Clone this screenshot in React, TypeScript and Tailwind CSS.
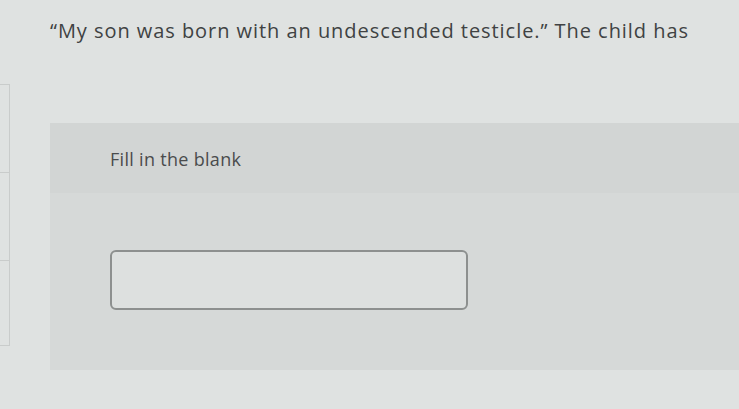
import React from 'react'

export default function App() {
  return (
    <div className="relative h-[409px] w-[739px] overflow-hidden bg-[#dfe2e1] font-['Open_Sans','Liberation_Sans',Arial,sans-serif]">
      {/* sidebar edge on the left */}
      <div className="absolute left-0 top-[84px] flex h-[262px] w-[10px] flex-col border border-l-0 border-[#c9cccb]">
        <div className="h-[88px] border-b border-[#c9cccb]" />
        <div className="h-[88px] border-b border-[#c9cccb]" />
      </div>

      <div className="pl-[50px] pt-[16px]">
        <p className="whitespace-nowrap text-[20px] leading-[30px] tracking-[0.95px] text-[#404243]">
          “My son was born with an undescended testicle.” The child has
        </p>

        <div className="mt-[77px] h-[247px] bg-[#d6d9d8]">
          <div className="flex h-[70px] items-center bg-[#d2d5d4] pl-[60px] pt-[3px]">
            <span className="text-[18px] tracking-[0.3px] text-[#4a4c4d]">Fill in the blank</span>
          </div>
          <div className="pl-[60px] pt-[57px]">
            <input
              type="text"
              className="h-[60px] w-[358px] rounded-[6px] border-2 border-[#8d908f] bg-[#dde0df] outline-none"
            />
          </div>
        </div>
      </div>
    </div>
  )
}
